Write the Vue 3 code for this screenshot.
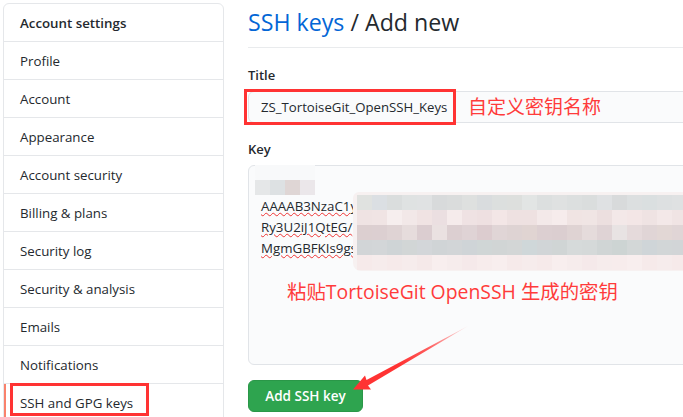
<script setup>
const items = ['Profile','Account','Appearance','Account security','Billing & plans','Security log','Security & analysis','Emails','Notifications','SSH and GPG keys']
const rows = [
  ['#e0e2e0','#dbdfe3','#dadddd','#dfe2e2','#e0e2e3','#d8dadb','#dadcdc','#dee0df','#d9dcde','#dcdfde','#dddfdd','#e2e5e4','#dcdfdf','#dfe1e1','#dcdfdf','#dadddd','#dfe1e3','#d8dadb','#dcdfe0','#dadfe0','#dde0e1','#dfe1e2'],
  ['#efe3e3','#f0e4e4','#f6eeee','#f2e8e8','#f0e3e3','#ebdfe1','#f5ebeb','#efe2e3','#eee0e1','#f3e6e6','#eee1e1','#eee1e1','#f3e9e9','#f6ecec','#f0e4e3','#f0e5e4','#ecdfdf','#f3e8e8','#f3e6e6','#efe3e3','#f3e8e8','#f0e4e4'],
  ['#dccfd0','#dccfd1','#dfd3d4','#e6dcdc','#dbcdd0','#eae1e1','#dccfd1','#dfd3d5','#dccccf','#e0d5d6','#ded3d3','#e0d4d2','#dccfd1','#dbced0','#dfd3d3','#e5dbdb','#dfd3d5','#e8e3e3','#e5dadb','#e0d5d6','#e2d7d5','#e0d5d6'],
  ['#d2d5d7','#d3d6d8','#cfd4d6','#d2d6d6','#d3d6d9','#d0d4d6','#d2d5d7','#cfd4d7','#d0d6d6','#d1d5d5','#d3d6d6','#cfd7d9','#d1d5d7','#d0d5d5','#d6dada','#d5d9d9','#d0d5d5','#cdd4d3','#d3d7d7','#cfd5d8','#d2d6d7','#d2d5d7'],
  ['#f6eaea','#f6ecec','#f6eaea','#f6ecec','#f5e9e9','#f8eeee','#f6ecec','#f5e9ea','#f7ecec','#f8eeee','#f6eaea','#f6ecec','#f6eaea','#f8eeee','#f6ecec','#f5e9ea','#f6ecec','#f7ecec','#f8eeee','#f6eaea','#f6ecec','#f6eaea'],
]
const top = ['#e5e7e8','#dde1e3','#dfd6d5','#ebe7ea']
</script>

<template>
  <div class="page">
    <nav class="side">
      <div class="side-head">Account settings</div>
      <a v-for="(it, i) in items" :key="it" class="side-item" :class="{ on: i === items.length - 1 }">{{ it }}</a>
    </nav>
    <main class="main">
      <h1 class="title"><span class="link">SSH keys</span> / Add new</h1>
      <label class="lab first">Title</label>
      <div class="input">ZS_TortoiseGit_OpenSSH_Keys</div>
      <label class="lab second">Key</label>
      <div class="area">
        <span class="w">AAAAB3NzaC1y</span><br>
        <span class="w">Ry3U2iJ1QtEG/</span><br>
        <span class="w">MgmGBFKIs9gs</span>
      </div>
      <button class="btn">Add SSH key</button>
    </main>

    <div class="blob-top"></div>
    <div class="mosaic-top">
      <i v-for="c in top" :key="c" :style="{ background: c }"></i>
    </div>
    <div class="fringe"></div>
    <div class="mosaic">
      <template v-for="(r, ri) in rows" :key="ri">
        <i v-for="(c, ci) in r" :key="ci" :style="{ background: c }"></i>
      </template>
    </div>

    <div class="box box-side"></div>
    <div class="box box-title"></div>
    <div class="note n1">自定义密钥名称</div>
    <div class="note n2">粘贴TortoiseGit OpenSSH 生成的密钥</div>
    <svg class="arrow" width="683" height="417" viewBox="0 0 683 417">
      <defs>
        <linearGradient id="tail" x1="468" y1="326" x2="353" y2="389" gradientUnits="userSpaceOnUse">
          <stop offset="0" stop-color="#f33" stop-opacity="0.1"/>
          <stop offset="0.35" stop-color="#f33" stop-opacity="0.8"/>
          <stop offset="0.6" stop-color="#f33"/>
        </linearGradient>
      </defs>
      <polygon points="468,326 368,385.5 371,389.5 353,389.5 365,375.5 366.5,380" fill="url(#tail)"/>
    </svg>
  </div>
</template>

<style>
html, body { margin: 0; background: #fff; }
</style>

<style scoped>
.page {
  position: relative;
  width: 683px;
  height: 417px;
  overflow: hidden;
  display: flex;
  align-items: flex-start;
  box-sizing: border-box;
  padding: 3px 0 0 3px;
  font-family: "Open Sans", "Noto Sans CJK SC", sans-serif;
  color: #24292e;
}
.side {
  flex: none;
  width: 221px;
  box-sizing: border-box;
  border: 1px solid #e5e7ea;
  border-radius: 6px;
  background: #fff;
}
.side-head {
  height: 37px;
  line-height: 38px;
  padding-left: 16px;
  font-size: 13.3px;
  font-weight: 600;
  border-bottom: 1px solid #e5e7ea;
}
.side-item {
  display: block;
  height: 37px;
  line-height: 38px;
  padding-left: 16px;
  font-size: 13.3px;
  color: #24292e;
  border-bottom: 1px solid #e5e7ea;
}
.side-item.on { box-shadow: inset 2px 0 0 #f9826c; }
.main {
  flex: none;
  width: 520px;
  margin-left: 24px;
}
.title {
  margin: -3px 0 0;
  height: 44px;
  line-height: 44px;
  font-size: 23.2px;
  font-weight: 400;
  padding-bottom: 3px;
  border-bottom: 1px solid #e9ebed;
}
.link { color: #0366d6; }
.lab {
  display: block;
  font-size: 13px;
  font-weight: 600;
  line-height: 20px;
}
.first { margin-top: 17px; }
.second { margin-top: 16px; }
.input {
  box-sizing: border-box;
  height: 32px;
  margin-top: 6px;
  padding-left: 12px;
  line-height: 30px;
  font-size: 13.2px;
  background: #fafbfc;
  border: 1px solid #e1e4e8;
  border-radius: 6px;
  white-space: nowrap;
}
.area {
  box-sizing: border-box;
  height: 200px;
  margin-top: 6px;
  padding: 30px 0 0 12px;
  line-height: 21px;
  font-size: 13.3px;
  background: #fafbfc;
  border: 1px solid #e1e4e8;
  border-radius: 6px;
}
.w { text-decoration: underline wavy #e33; text-decoration-thickness: 1px; }
.btn {
  display: block;
  box-sizing: border-box;
  width: 115px;
  height: 32px;
  margin-top: 15px;
  padding: 0;
  font-family: inherit;
  font-size: 13.5px;
  font-weight: 600;
  color: #fff;
  background: #2ea44f;
  border: 1px solid #2a9748;
  border-radius: 6px;
}
.blob-top {
  position: absolute;
  left: 255px;
  top: 165px;
  width: 60px;
  height: 30px;
  background: #f8f9fa;
  border-radius: 0 0 16px 20px;
}
.mosaic-top {
  position: absolute;
  left: 255px;
  top: 180px;
  display: grid;
  grid-template-columns: repeat(4, 15px);
  grid-auto-rows: 15px;
}
.fringe {
  position: absolute;
  left: 353px;
  top: 192px;
  width: 340px;
  height: 79px;
  background: #f7f1f1;
  border-radius: 6px 0 0 8px;
}
.mosaic {
  position: absolute;
  left: 357px;
  top: 195px;
  display: grid;
  grid-template-columns: repeat(22, 15px);
  grid-auto-rows: 15px;
}
.box {
  position: absolute;
  box-sizing: border-box;
  border: 3px solid #ff3333;
}
.box-side { left: 10px; top: 383px; width: 139px; height: 33px; }
.box-title { left: 244px; top: 89px; width: 212px; height: 36px; }
.note {
  position: absolute;
  color: #ff3b3b;
  line-height: 24px;
  white-space: nowrap;
}
.n1 { left: 468px; top: 95px; font-size: 19px; }
.n2 { left: 287px; top: 280px; font-size: 19.4px; }
.arrow { position: absolute; left: 0; top: 0; }
</style>
